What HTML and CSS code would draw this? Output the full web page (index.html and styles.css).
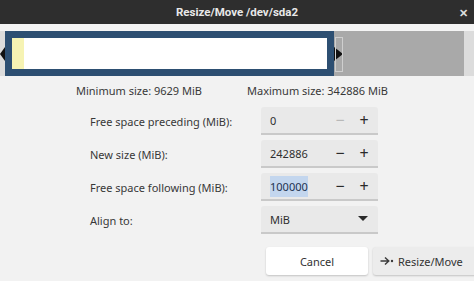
FILE: index.html
```html
<!DOCTYPE html>
<html lang="en">
<head>
    <meta charset="UTF-8">
    <title>Resize/Move /dev/sda2</title>
    <link rel="stylesheet" href="styles.css">
</head>
<body>
    <div class="dialog">
        <header class="titlebar">
            <span class="title">Resize/Move /dev/sda2</span>
            <span class="close">&#x2715;</span>
        </header>

        <div class="graph">
            <div class="track">
                <div class="partition">
                    <div class="used"></div>
                    <div class="free-in"></div>
                </div>
                <div class="unalloc"></div>
                <span class="handle handle-left"></span>
                <span class="handle handle-right"></span>
                <span class="edge"></span>
            </div>
        </div>

        <div class="limits">
            <span>Minimum size: 9629 MiB</span>
            <span>Maximum size: 342886 MiB</span>
        </div>

        <div class="form">
            <label>Free space preceding (MiB):</label>
            <div class="spin">
                <span class="value">0</span>
                <span class="step disabled">&minus;</span>
                <span class="step">+</span>
            </div>

            <label>New size (MiB):</label>
            <div class="spin">
                <span class="value">242886</span>
                <span class="step">&minus;</span>
                <span class="step">+</span>
            </div>

            <label>Free space following (MiB):</label>
            <div class="spin">
                <span class="value"><span class="selected">100000</span></span>
                <span class="step">&minus;</span>
                <span class="step">+</span>
            </div>

            <label>Align to:</label>
            <div class="spin combo">
                <span class="value">MiB</span>
                <svg class="caret" width="10" height="6" viewBox="0 0 10 6"><path d="M0 0h10L5 5z" fill="#2a2a2a"/></svg>
            </div>
        </div>

        <div class="actions">
            <button class="btn cancel">Cancel</button>
            <button class="btn apply">
                <svg width="15" height="10" viewBox="0 0 15 10"><path d="M0.5 5h8M5 1.5L8.8 5 5 8.5" stroke="#3a3a3a" stroke-width="1.4" fill="none"/><circle cx="12" cy="5" r="1.2" fill="#3a3a3a"/></svg>
                Resize/Move
            </button>
        </div>
    </div>
</body>
</html>
```

FILE: styles.css
```css
body {
    margin: 0;
    width: 474px;
    height: 281px;
    overflow: hidden;
    background-color: #f2f2f2;
    font-family: "Noto Sans", sans-serif;
    font-size: 11px;
    color: #383838;
}

.titlebar {
    height: 24px;
    background-color: #2e2e2e;
    color: #e8e8e8;
    display: flex;
    align-items: center;
    justify-content: center;
    position: relative;
}

.title {
    font-family: Roboto, sans-serif;
    font-weight: bold;
    font-size: 11.5px;
}

.close {
    position: absolute;
    right: 6px;
    top: 5px;
    font-size: 11px;
    font-weight: bold;
    color: #dddddd;
}

.graph {
    padding-top: 7px;
    background-color: #f4f4f4;
}

.track {
    position: relative;
    display: flex;
    height: 45px;
    background-color: #dcdcdc;
}

.partition {
    margin-left: 5px;
    width: 315px;
    padding: 7px;
    background-color: #2d4f72;
    display: flex;
}

.used {
    width: 12px;
    background-color: #f6f3b3;
}

.free-in {
    flex: 1;
    background-color: #ffffff;
}

.unalloc {
    width: 130px;
    background-color: #a9a9a9;
}

.handle {
    position: absolute;
    width: 0;
    height: 0;
    border-top: 7px solid transparent;
    border-bottom: 7px solid transparent;
}

.handle-left {
    left: 0;
    top: 16px;
    border-right: 5px solid #111111;
}

.handle-right {
    left: 334px;
    top: 16px;
    border-left: 9px solid #111111;
}

.edge {
    position: absolute;
    left: 335px;
    top: 6px;
    width: 6px;
    height: 33px;
    border: 1px solid #cfcfcf;
}

.limits {
    display: grid;
    grid-template-columns: 171px auto;
    margin-top: 8px;
    padding-left: 76px;
    line-height: 14px;
}

.form {
    display: grid;
    grid-template-columns: 171px 117px;
    grid-auto-rows: 28px;
    row-gap: 5px;
    margin-top: 9px;
    padding-left: 90px;
    align-items: center;
}

.spin {
    height: 26px;
    display: flex;
    align-items: center;
    background-color: #e9e9e9;
    border-bottom: 2px solid #c9c9c9;
    border-radius: 3px 3px 0 0;
    color: #2f2f2f;
}

.value {
    flex: 1;
    padding-left: 9px;
}

.selected {
    background-color: #c3d6ee;
    color: #1d3350;
    padding: 3px 0;
}

.step {
    width: 24px;
    text-align: center;
    font-size: 16px;
    color: #2a2a2a;
}

.step:last-child {
    margin-right: 2px;
}

.step.disabled {
    color: #b8b8b8;
}

.caret {
    margin-right: 10px;
}

.actions {
    display: flex;
    justify-content: flex-end;
    gap: 5px;
    margin-top: 13px;
    margin-right: -4px;
}

.btn {
    height: 28px;
    border: none;
    border-radius: 3px;
    font-family: "Noto Sans", sans-serif;
    font-size: 11px;
    color: #333333;
    box-shadow: 0 1px 2px rgba(0, 0, 0, 0.2);
}

.cancel {
    width: 102px;
    background-color: #ffffff;
}

.apply {
    width: 105px;
    background-color: #ececec;
    display: flex;
    align-items: center;
    gap: 3px;
    padding-left: 7px;
}
```
